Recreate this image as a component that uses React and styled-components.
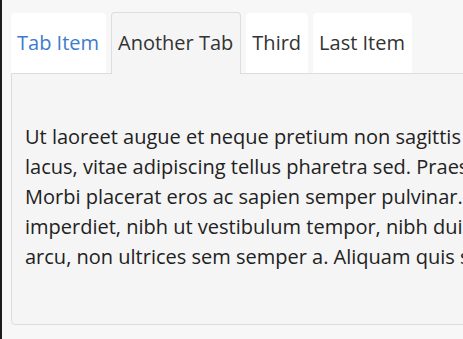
import React, { useState } from 'react';
import styled, { createGlobalStyle } from 'styled-components';

const GlobalStyle = createGlobalStyle`
  html, body {
    margin: 0;
    padding: 0;
    height: 100%;
    overflow: hidden;
  }
  body {
    background: #f7f7f7;
    border-left: 2px solid #1c1c1c;
    font-family: 'Open Sans', 'Liberation Sans', sans-serif;
  }
`;

const tabs = ['Tab Item', 'Another Tab', 'Third', 'Last Item'];

const lines = [
  'Ut laoreet augue et neque pretium non sagittis nibh pulvinar. Etiam ornare',
  'lacus, vitae adipiscing tellus pharetra sed. Praesent bibendum lacus quis',
  'Morbi placerat eros ac sapien semper pulvinar. Vestibulum facilisis, purus',
  'imperdiet, nibh ut vestibulum tempor, nibh dui volutpat lacus, vel lobortis',
  'arcu, non ultrices sem semper a. Aliquam quis sem mi. Donec eu tincidunt',
];

const App = () => {
  const [active, setActive] = useState(1);
  return (
    <>
      <GlobalStyle />
      <Wrapper>
        <TabList>
          {tabs.map((t, i) => (
            <Tab
              key={t}
              $active={i === active}
              $highlight={i === 0}
              onClick={() => setActive(i)}
            >
              {t}
            </Tab>
          ))}
        </TabList>
        <Panel>
          <Text>
            {lines.map((l) => (
              <Line key={l}>{l}</Line>
            ))}
          </Text>
        </Panel>
      </Wrapper>
    </>
  );
};

const Wrapper = styled.div`
  padding: 12px 0 0 9px;
  width: 640px;
`;

const TabList = styled.div`
  display: flex;
  align-items: flex-end;
  gap: 5px;
  margin-bottom: -1px;
  position: relative;
  z-index: 1;
`;

const Tab = styled.div`
  box-sizing: border-box;
  padding: 0 7px 0 6px;
  font-size: 20px;
  line-height: 60px;
  cursor: pointer;
  border-radius: 4px 4px 0 0;
  color: ${(p) => (p.$highlight ? '#3d7bd0' : '#333')};
  background: ${(p) => (p.$active ? '#f5f5f5' : '#fff')};
  height: ${(p) => (p.$active ? '62px' : '60px')};
  margin-bottom: ${(p) => (p.$active ? '0' : '1px')};
  border: ${(p) => (p.$active ? '1px solid #ddd' : 'none')};
  border-bottom: none;
`;

const Panel = styled.div`
  box-sizing: border-box;
  height: 252px;
  background: #f5f5f5;
  border: 1px solid #ddd;
  border-radius: 0 0 4px 4px;
  padding: 48px 13px;
  overflow: hidden;
`;

const Text = styled.div`
  font-size: 20px;
  line-height: 30px;
  color: #222;
`;

const Line = styled.div`
  white-space: nowrap;
`;

export default App;
